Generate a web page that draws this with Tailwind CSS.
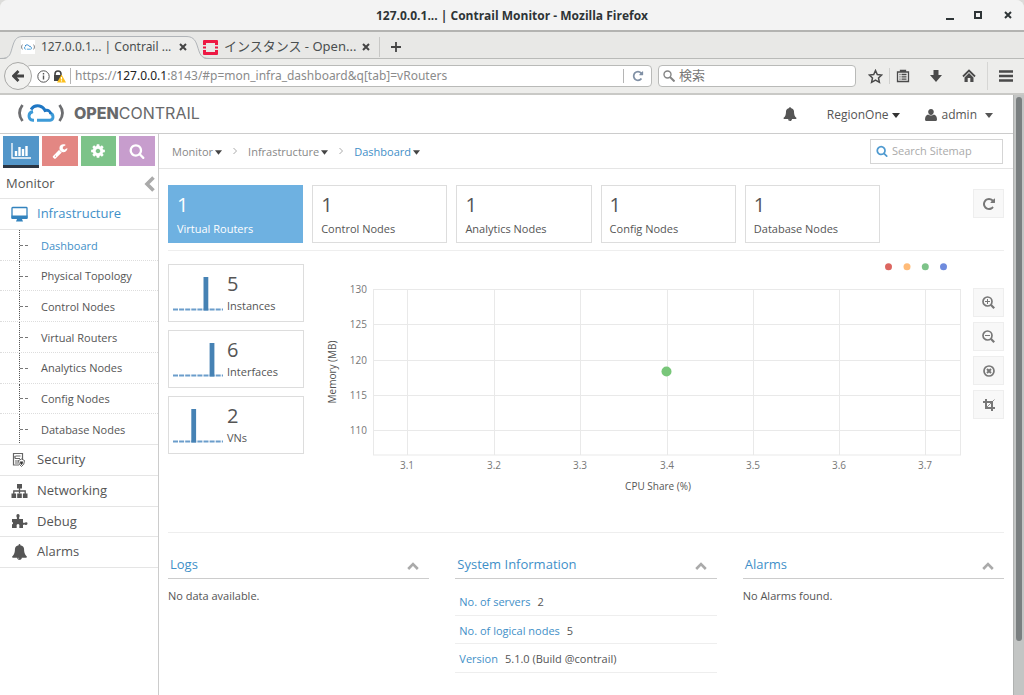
<!DOCTYPE html>
<html lang="en">
<head>
<meta charset="utf-8">
<meta name="viewport" content="width=device-width, initial-scale=1">
<title>127.0.0.1... | Contrail Monitor - Mozilla Firefox</title>
<script src="https://cdn.jsdelivr.net/npm/@tailwindcss/browser@4"></script>
</head>
<body class="bg-[#dcdcda]">
<svg class="hidden" aria-hidden="true">
  <symbol id="bell" viewBox="0 0 1792 1792"><path d="M912 1696q0-16-16-16-59 0-101.500-42.500t-42.500-101.500q0-16-16-16t-16 16q0 73 51.500 124.500t124.500 51.500q16 0 16-16zm816-288q0 52-38 90t-90 38h-448q0 106-75 181t-181 75-181-75-75-181h-448q-52 0-90-38t-38-90q50-42 91-88t85-119.500 74.500-158.500 50-206 19.500-260q0-152 117-282.500t307-158.500q-8-19-8-39 0-40 28-68t68-28 68 28 28 68q0 20-8 39 190 28 307 158.500t117 282.500q0 139 19.500 260t50 206 74.500 158.500 85 119.500 91 88z"/></symbol>
  <symbol id="search" viewBox="0 0 1792 1792"><path d="M1216 832q0-185-131.500-316.500t-316.500-131.500-316.500 131.500-131.500 316.500 131.500 316.500 316.500 131.500 316.500-131.500 131.500-316.500zm512 832q0 52-38 90t-90 38q-54 0-90-38l-343-342q-179 124-399 124-143 0-273.500-55.500t-225-150-150-225-55.500-273.500 55.500-273.500 150-225 225-150 273.500-55.500 273.500 55.500 225 150 150 225 55.500 273.500q0 220-124 399l343 343q37 37 37 90z"/></symbol>
  <symbol id="repeat" viewBox="0 0 1792 1792"><path d="M1664 256v448q0 26-19 45t-45 19h-448q-42 0-59-40-17-39 14-69l138-138q-148-137-349-137-104 0-198.500 40.500t-163.500 109.500-109.500 163.500-40.500 198.500 40.500 198.500 109.500 163.500 163.500 109.500 198.500 40.500q119 0 225-52t179-147q7-10 23-12 15 0 25 9l137 138q9 8 9.500 20.500t-7.500 22.500q-109 132-264 204.500t-327 72.500q-156 0-298-61t-245-164-164-245-61-298 61-298 164-245 245-164 298-61q147 0 284.500 55.500t244.500 156.500l130-129q29-31 70-14 39 17 39 59z"/></symbol>
  <symbol id="caret" viewBox="0 0 8 5"><path d="M0 0h8L4 5z"/></symbol>
  <symbol id="collapse" viewBox="0 0 12 8"><path d="M1.200 7 6 2.200 10.800 7" fill="none" stroke="currentColor" stroke-width="2.600"/></symbol>
  <symbol id="cloud" viewBox="0 0 46 20">
    <path d="M4.500 2Q1.500 6 1.500 10t3 8M41.500 2Q44.500 6 44.500 10t-3 8" fill="none" stroke="#6d6e71" stroke-width="2.800"/>
    <path d="M16 17.300h-1q-4-.5-4-4.300 0-3.500 4-4.500M19 17.300h13q3-.5 3-3.300 0-3-2.500-3.500" fill="none" stroke="#3d9bd8" stroke-width="2.900"/>
    <path d="M13 6.500Q16 2 21.500 3q4 1 5.500 4.500 5-1 5.700 3.500" fill="none" stroke="#1f77c4" stroke-width="2.900"/>
  </symbol>
</svg>

<div class="flex min-h-screen flex-col overflow-hidden rounded-t-lg bg-[#ededeb] font-['Open_Sans','Noto_Sans_CJK_JP',sans-serif] text-[#555]">

  <!-- Window title -->
  <div class="flex h-8 items-center border-b-2 border-[#b3b3b1] bg-[#f3f3f3] text-[#2e3436]">
    <div class="w-24"></div>
    <div class="flex-1 pt-0.5 text-center text-xs font-bold">127.0.0.1... | Contrail Monitor - Mozilla Firefox</div>
    <div class="flex w-24 items-center justify-end gap-5 pr-3">
      <button aria-label="Minimize" class="flex h-3 w-2 items-end justify-center pb-px"><span class="h-0.5 w-2 bg-[#2e3436]"></span></button>
      <button aria-label="Maximize" class="h-2 w-2 border-2 border-[#2e3436]"></button>
      <button aria-label="Close"><svg class="ml-0.5 h-2 w-2" viewBox="0 0 8 8"><path d="m1 1 6 6m0-6L1 7" stroke="#2e3436" stroke-width="2"/></svg></button>
    </div>
  </div>

  <!-- Tabs -->
  <div class="flex h-[27px] items-center border-b border-[#b9bab8] bg-[#e8e8e6] font-['Noto_Sans','Noto_Sans_CJK_JP',sans-serif] text-[#4a4f50]">
    <div class="relative flex h-[27px] w-[203px] items-center pt-1 pl-[21px] text-xs">
      <svg class="absolute top-1 left-0 h-6 w-[210px]" viewBox="0 0 210 24" aria-hidden="true"><path d="M0 23.500C11 23.500 10 18 13 9 15 3 17 .5 23 .5H186C192 .5 195 3 197 9 200 18 200 23.500 210 23.500V24H0z" fill="#ededeb"/><path d="M0 22.500C11 22.500 10 18 13 9 15 3 17 .5 23 .5H186C192 .5 195 3 197 9 200 18 200 22.500 210 22.500" fill="none" stroke="#b0b4b8"/></svg>
      <div class="relative flex items-center">
        <span class="flex h-3.5 w-3.5 items-center bg-white"><svg class="h-1.5 w-3.5"><use href="#cloud"/></svg></span>
        <a href="#contrail" class="ml-1.5 w-[138px] whitespace-nowrap">127.0.0.1... | Contrail ...</a>
        <button aria-label="Close Contrail tab"><svg class="h-2 w-2" viewBox="0 0 8 8"><path d="m1 1 6 6m0-6L1 7" stroke="#444" stroke-width="2"/></svg></button>
      </div>
    </div>
    <div class="relative mt-1 flex h-5 w-[177px] items-center border-r border-[#c8c8c6] text-[13px]">
      <svg class="h-[15px] w-[15px]" viewBox="0 0 15 15"><path d="M0 1q0-1 1-1h13q1 0 1 1v4h-3V3H3v2H0zM0 6.500h3v2H0zM12 6.500h3v2h-3zM0 10h3v2h9v-2h3v4q0 1-1 1H1q-1 0-1-1z" fill="#ed1944"/></svg>
      <a href="#instances" class="ml-1.5 w-[138px] whitespace-nowrap">インスタンス - Open...</a>
      <button aria-label="Close instances tab"><svg class="h-2 w-2" viewBox="0 0 8 8"><path d="m1 1 6 6m0-6L1 7" stroke="#444" stroke-width="2"/></svg></button>
    </div>
    <button aria-label="New tab" class="mt-1 ml-2.5"><svg class="h-3 w-3" viewBox="0 0 12 12"><path d="M6 1v10M1 6h10" stroke="#444" stroke-width="1.800"/></svg></button>
  </div>

  <!-- Navigation toolbar -->
  <div class="flex h-9 items-center border-b-2 border-[#c9c9c6] bg-[#ededeb] pl-1 font-['Noto_Sans','Noto_Sans_CJK_JP',sans-serif] text-xs">
    <button aria-label="Back" class="z-10 flex h-7 w-7 shrink-0 items-center justify-center rounded-full border border-[#a9a9a7] bg-[#f1f1ef]"><svg class="h-3 w-3" viewBox="0 0 12 12"><path d="M6.500 1 1.500 6l5 5M2 6h10" fill="none" stroke="#444" stroke-width="2.800"/></svg></button>
    <div class="-ml-1.5 flex h-[22px] flex-1 items-center rounded-sm border border-[#b9bab8] bg-white pl-2.5">
      <svg class="h-[13px] w-[13px] shrink-0" viewBox="0 0 13 13"><circle cx="6.500" cy="6.500" r="5.700" fill="none" stroke="#555"/><path d="M6.500 5.500v4M6.500 3v1.500" stroke="#555" stroke-width="1.400"/></svg>
      <svg class="ml-[3px] h-[13px] w-[13px] shrink-0" viewBox="0 0 13 13"><path d="M2 6V4a3 3 0 0 1 6 0v2" fill="none" stroke="#444" stroke-width="1.600"/><path d="M1 5h8v6H1z" fill="#444"/><path d="m8.500 4.500 4.500 8H4z" fill="#fbbf1e"/><path d="M8.500 7v2.500m0 .8v1.200" stroke="#fff" stroke-width="1.200"/></svg>
      <div class="ml-1 grid flex-1 items-center border-l border-[#b5b5b5] pl-1">
        <input class="col-start-1 row-start-1 w-full text-transparent outline-none" aria-label="Address">
        <div class="pointer-events-none col-start-1 row-start-1 whitespace-nowrap text-[#8b8b8b]">https://<span class="text-[#222]">127.0.0.1</span>:8143/#p=mon_infra_dashboard&amp;q[tab]=vRouters</div>
      </div>
      <button aria-label="Reload" class="flex h-3.5 w-7 items-center justify-center border-l border-[#b5b5b5]"><svg class="h-3 w-3 fill-[#8090a5]"><use href="#repeat"/></svg></button>
    </div>
    <div class="ml-1.5 flex h-[22px] w-[198px] shrink-0 items-center rounded-sm border border-[#b9bab8] bg-white pl-1">
      <svg class="h-3 w-3" viewBox="0 0 12 12"><circle cx="4.500" cy="4.500" r="3.500" fill="none" stroke="#858585" stroke-width="1.400"/><path d="m7 7 4.500 4.500" stroke="#858585" stroke-width="2"/></svg>
      <input aria-label="検索" placeholder="検索" class="ml-1 min-w-0 flex-1 text-[13px] outline-none placeholder:text-[#777]">
    </div>
    <div class="flex shrink-0 items-center pl-3 text-[#4a4a4a]">
      <button aria-label="Bookmark"><svg class="h-[15px] w-[15px]" viewBox="0 0 15 15"><path d="m7.500 1.500 1.800 4 4.400.5-3.200 3 .9 4.400-3.900-2.200-3.900 2.200.9-4.400-3.200-3 4.400-.5z" fill="none" stroke="currentColor" stroke-width="1.500"/></svg></button>
      <span class="mx-1.5 h-4 w-px bg-[#d0d0ce]"></span>
      <button aria-label="Bookmarks list"><svg class="h-3.5 w-3.5" viewBox="0 0 14 14"><path d="M1.500 3h11v9.500h-11zM4.500 3V1.500h5V3M3.500 5.500h1m1 0h5m-7 2.300h1m1 0h5m-7 2.300h1m1 0h5" fill="none" stroke="currentColor" stroke-width="1.300"/></svg></button>
      <button aria-label="Downloads" class="ml-5"><svg class="h-3.5 w-3" viewBox="0 0 12 14"><path d="M3.500 1h5v5H12l-6 7-6-7h3.500z" fill="currentColor"/></svg></button>
      <button aria-label="Home" class="ml-5"><svg class="h-3.5 w-3.5" viewBox="0 0 14 14"><path d="m1 7.500 6-6 6 6" fill="none" stroke="currentColor" stroke-width="1.800"/><path d="M2.500 8.500 7 4l4.500 4.500V13H8.300V9H5.700v4H2.500z" fill="currentColor"/></svg></button>
      <span class="mx-[11px] h-7 w-px bg-[#d6d6d4]"></span>
      <button aria-label="Menu" class="mr-[11px]"><svg class="h-3 w-3.5" viewBox="0 0 14 12"><path d="M0 1.500h14M0 6h14M0 10.500h14" stroke="currentColor" stroke-width="2.500"/></svg></button>
    </div>
  </div>

  <div class="flex flex-1">
    <div class="flex min-w-0 flex-1 flex-col bg-white">
      <!-- Site header -->
      <header class="flex h-[39px] items-center border-b border-[#ccc] pr-5 text-xs">
        <a href="#home" class="flex items-center pb-0.5 pl-[18px] font-['Inter',sans-serif] text-base leading-none text-[#68696b]">
          <svg class="mr-2.5 h-5 w-[46px]"><use href="#cloud"/></svg><span><b class="font-extrabold">OPEN</b>CONTRAIL</span>
        </a>
        <button aria-label="Notifications" class="ml-auto"><svg class="h-3.5 w-3.5 fill-[#555]"><use href="#bell"/></svg></button>
        <button class="ml-[30px] flex items-center gap-1 pt-0.5">RegionOne<svg class="h-[5px] w-2 fill-[#333]"><use href="#caret"/></svg></button>
        <button class="ml-[25px] flex items-center pt-0.5"><svg class="mr-1 h-3 w-3 fill-[#555]" viewBox="0 0 12 12"><path d="M6 0c4 0 3.500 6 0 6S2 0 6 0M3 5.500q3 2 6 0 3 1 3 5 0 1.500-1.500 1.500h-9Q0 12 0 10.500q0-4 3-5"/></svg>admin<svg class="ml-2 h-[5px] w-2 fill-[#555]"><use href="#caret"/></svg></button>
      </header>

      <div class="flex flex-1">
        <!-- Sidebar -->
        <nav class="w-[159px] shrink-0 border-r border-[#ccc] text-[13px]">
          <div class="flex h-[35px] gap-[3px] px-[3px] pt-0.5">
            <button aria-label="Monitor" class="flex h-8 flex-1 items-center justify-center border-b-[3px] border-[#2b3542] bg-[#5396c9]"><svg class="h-4 w-5" viewBox="0 0 20 16"><path d="M1 0v15h19" fill="none" stroke="#fff" stroke-width="1.300"/><path d="M5 13V8M8.500 13V4M12 13V6M15.500 13V3" stroke="#fff" stroke-width="2.400"/></svg></button>
            <button aria-label="Configure" class="flex h-[30px] flex-1 items-center justify-center bg-[#e38783]"><svg class="h-4 w-4 fill-white" viewBox="0 0 1792 1792"><path d="M448 1472q0-26-19-45t-45-19-45 19-19 45 19 45 45 19 45-19 19-45zm644-420l-682 682q-37 37-90 37-52 0-91-37l-106-108q-38-36-38-90 0-53 38-91l681-681q39 98 114.500 173.500t173.500 114.500zm634-435q0 39-23 106-47 134-164.500 217.500t-258.500 83.500q-185 0-316.500-131.500t-131.500-316.500 131.500-316.500 316.500-131.500q58 0 121.500 16.500t107.500 46.500q16 11 16 28t-16 28l-293 169v224l193 107q5-3 79-48.500t135.500-81 70.500-35.500q15 0 23.500 10t8.500 25z"/></svg></button>
            <button aria-label="Settings" class="flex h-[30px] flex-1 items-center justify-center bg-[#7dc389]"><svg class="h-4 w-4 fill-white" viewBox="0 0 1792 1792"><path d="M1152 896q0-106-75-181t-181-75-181 75-75 181 75 181 181 75 181-75 75-181zm512-109v222q0 12-8 23t-20 13l-185 28q-19 54-39 91 35 50 107 138 10 12 10 25t-9 23q-27 37-99 108t-94 71q-12 0-26-9l-138-108q-44 23-91 38-16 136-29 186-7 28-36 28h-222q-14 0-24.500-8.500t-11.500-21.500l-28-184q-49-16-90-37l-141 107q-10 9-25 9-14 0-25-11-126-114-165-168-7-10-7-23 0-12 8-23 15-21 51-66.500t54-70.500q-27-50-41-99l-183-27q-13-2-21-12.500t-8-23.500v-222q0-12 8-23t19-13l186-28q14-46 39-92-40-57-107-138-10-12-10-24 0-10 9-23 26-36 98.500-107.500t94.500-71.500q13 0 26 10l138 107q44-23 91-38 16-136 29-186 7-28 36-28h222q14 0 24.500 8.500t11.500 21.500l28 184q49 16 90 37l142-107q9-9 24-9 13 0 25 10 129 119 165 170 7 8 7 22 0 12-8 23-15 21-51 66.500t-54 70.500q26 50 41 98l183 28q13 2 21 12.500t8 23.500z"/></svg></button>
            <button aria-label="Query" class="flex h-[30px] flex-1 items-center justify-center bg-[#c79dcd]"><svg class="h-4 w-4 fill-white"><use href="#search"/></svg></button>
          </div>
          <div class="flex h-[30px] items-center justify-between border-b border-[#e5e5e5] pr-[3px] pl-1.5">Monitor
            <button aria-label="Collapse menu"><svg class="h-4 w-[11px]" viewBox="0 0 11 16"><path d="M9.500 1.500 3 8l6.500 6.500" fill="none" stroke="#aaa" stroke-width="3.600"/></svg></button>
          </div>
          <a href="#infrastructure" class="flex h-[31px] items-center border-b border-[#e5e5e5] pl-[11px] text-[#3f8fc8]"><svg class="mr-[9px] h-4 w-[17px]" viewBox="0 0 17 16"><path d="M1.700 1.500h13.600q.7 0 .7.700v9.600H1V2.200q0-.7.700-.7z" fill="none" stroke="#3383be" stroke-width="1.300"/><path d="M.5 9.500h16V12q0 1-1 1h-14q-1 0-1-1zM6 13h5l1 2.500H5z" fill="#3383be"/></svg>Infrastructure</a>
          <div class="grid h-[215px] grid-rows-7 text-[11px]">
            <a href="#dashboard" class="flex items-stretch text-[#3f8fc8]"><span class="ml-[19px] flex items-center border-l border-dotted border-[#555]"><i class="w-2 border-t border-dashed border-[#777]"></i></span><span class="-ml-7 flex flex-1 items-center border-b border-dotted border-[#ddd] pt-0.5 pl-[41px]">Dashboard</span></a>
            <a href="#topology" class="flex items-stretch"><span class="ml-[19px] flex items-center border-l border-dotted border-[#555]"><i class="w-2 border-t border-dashed border-[#777]"></i></span><span class="-ml-7 flex flex-1 items-center border-b border-dotted border-[#ddd] pt-0.5 pl-[41px]">Physical Topology</span></a>
            <a href="#control" class="flex items-stretch"><span class="ml-[19px] flex items-center border-l border-dotted border-[#555]"><i class="w-2 border-t border-dashed border-[#777]"></i></span><span class="-ml-7 flex flex-1 items-center border-b border-dotted border-[#ddd] pt-0.5 pl-[41px]">Control Nodes</span></a>
            <a href="#vrouters" class="flex items-stretch"><span class="ml-[19px] flex items-center border-l border-dotted border-[#555]"><i class="w-2 border-t border-dashed border-[#777]"></i></span><span class="-ml-7 flex flex-1 items-center border-b border-dotted border-[#ddd] pt-0.5 pl-[41px]">Virtual Routers</span></a>
            <a href="#analytics" class="flex items-stretch"><span class="ml-[19px] flex items-center border-l border-dotted border-[#555]"><i class="w-2 border-t border-dashed border-[#777]"></i></span><span class="-ml-7 flex flex-1 items-center border-b border-dotted border-[#ddd] pt-0.5 pl-[41px]">Analytics Nodes</span></a>
            <a href="#config" class="flex items-stretch"><span class="ml-[19px] flex items-center border-l border-dotted border-[#555]"><i class="w-2 border-t border-dashed border-[#777]"></i></span><span class="-ml-7 flex flex-1 items-center border-b border-dotted border-[#ddd] pt-0.5 pl-[41px]">Config Nodes</span></a>
            <a href="#database" class="flex items-stretch"><span class="ml-[19px] flex items-center border-l border-dotted border-[#555]"><i class="w-2 border-t border-dashed border-[#777]"></i></span><span class="-ml-7 flex flex-1 items-center border-b border-[#e5e5e5] pt-0.5 pl-[41px]">Database Nodes</span></a>
          </div>
          <div class="grid h-[123px] grid-rows-4">
            <a href="#security" class="flex items-center border-b border-[#e5e5e5] pl-[11px]"><svg class="mr-[9px] h-4 w-[17px]" viewBox="0 0 17 16"><path d="M8 13H2.500V1.500h9V7M4.500 4h5M4 6.500h5M4 6.500V4M4 9h4M4 11h3" fill="none" stroke="#666" stroke-width="1.200"/><path d="M7.500 8.500 10.500 7l3 1.500q0 4.500-3 6-3-1.500-3-6z" fill="#fff" stroke="#666"/><path d="M9 9.500h3q0 2.500-1.500 3.500Q9 12 9 9.500z" fill="#333"/></svg>Security</a>
            <a href="#networking" class="flex items-center border-b border-[#e5e5e5] pl-[11px]"><svg class="mr-[9px] h-4 w-[17px] fill-[#555]" viewBox="0 0 17 16"><path d="M6 1h5v4.500H6zM.5 10.500h4.600V15H.5zM6.200 10.500h4.600V15H6.200zM11.900 10.500h4.600V15h-4.600z"/><path d="M8.500 5v5.500M2.800 11V8h11.400v3" fill="none" stroke="#555" stroke-width="1.300"/></svg>Networking</a>
            <a href="#debug" class="flex items-center border-b border-[#e5e5e5] pl-[11px]"><svg class="mr-[9px] h-4 w-[17px] fill-[#555]" viewBox="0 0 17 16"><path d="M1 6h4.800q.6-1-.3-2.300Q5 1 7 1t1.500 2.700Q7.600 5 8.300 6H12v3.500q1 .8 2 .1 2.500-1 2.500 1t-2.500 1.200q-1-.6-2 .2v3H8.500q-.7-1 0-2Q8.500 11 7 11t-1.500 2q.7 1 0 2H1v-3.500q1.500-.5 1-2-.5-.5-1-.5z"/></svg>Debug</a>
            <a href="#alarms" class="flex items-center border-b border-[#e5e5e5] pl-[11px]"><svg class="mr-[9px] h-4 w-[17px] fill-[#555]"><use href="#bell"/></svg>Alarms</a>
          </div>
        </nav>

        <main class="min-w-0 flex-1 text-[11px]">
          <!-- Breadcrumb -->
          <div class="flex h-[35px] items-center border-b border-[#e5e5e5] pr-2.5 pl-[13px] text-[#888]">
            <button class="flex items-center gap-0.5 pt-0.5">Monitor<svg class="h-[5px] w-[7px] fill-[#444]"><use href="#caret"/></svg></button>
            <svg class="mx-[11px] h-2 w-1" viewBox="0 0 4 8"><path d="m.5 1 3 3-3 3" fill="none" stroke="#aaa"/></svg>
            <button class="flex items-center gap-0.5 pt-0.5">Infrastructure<svg class="h-[5px] w-[7px] fill-[#444]"><use href="#caret"/></svg></button>
            <svg class="mx-[11px] h-2 w-1" viewBox="0 0 4 8"><path d="m.5 1 3 3-3 3" fill="none" stroke="#aaa"/></svg>
            <button class="flex items-center gap-0.5 pt-0.5 text-[#3f8fc8]">Dashboard<svg class="h-[5px] w-[7px] fill-[#444]"><use href="#caret"/></svg></button>
            <label class="ml-auto flex h-[25px] w-[133px] items-center border border-[#d5d5d5] pl-[5px]"><svg class="h-3 w-3 fill-[#4f9ad0]"><use href="#search"/></svg><input aria-label="Search Sitemap" placeholder="Search Sitemap" class="ml-1 min-w-0 flex-1 outline-none placeholder:text-[#aaa]"></label>
          </div>

          <div class="px-[9px] pt-4">
            <!-- Node counts -->
            <div class="flex items-start justify-between border-b border-[#eee] pb-[7px]">
              <div class="grid w-[712px] grid-cols-5 gap-[9px] leading-4">
                <button class="flex h-[58px] flex-col border border-[#6eb1e1] bg-[#6eb1e1] px-2 pt-[7px] text-left text-white"><span class="text-xl leading-6">1</span><span class="pt-1">Virtual Routers</span></button>
                <button class="flex h-[58px] flex-col border border-[#ddd] px-2 pt-[7px] text-left"><span class="text-xl leading-6">1</span><span class="pt-1">Control Nodes</span></button>
                <button class="flex h-[58px] flex-col border border-[#ddd] px-2 pt-[7px] text-left"><span class="text-xl leading-6">1</span><span class="pt-1">Analytics Nodes</span></button>
                <button class="flex h-[58px] flex-col border border-[#ddd] px-2 pt-[7px] text-left"><span class="text-xl leading-6">1</span><span class="pt-1">Config Nodes</span></button>
                <button class="flex h-[58px] flex-col border border-[#ddd] px-2 pt-[7px] text-left"><span class="text-xl leading-6">1</span><span class="pt-1">Database Nodes</span></button>
              </div>
              <button aria-label="Refresh" class="mt-1 flex h-[29px] w-[31px] items-center justify-center border border-[#eee] bg-[#f8f8f8]"><svg class="h-3.5 w-3.5 fill-[#777]"><use href="#repeat"/></svg></button>
            </div>

            <div class="flex items-start border-b border-[#eee] pt-[13px] pb-[35px]">
              <div class="flex w-[136px] shrink-0 flex-col gap-2 leading-4">
                <div class="flex h-[58px] border border-[#ddd] pt-[7px] pl-1"><svg class="mt-[5px] h-[34px] w-[50px]" viewBox="0 0 50 34"><path d="M0 32.500h50" stroke="#6b9dcb" stroke-width="2" stroke-dasharray="5 1.100"/><path d="M30.500 0h4.800v33.500h-4.800z" fill="#4682b4"/></svg><div class="flex flex-col pl-1"><span class="text-xl leading-6">5</span><span class="pt-0.5">Instances</span></div></div>
                <div class="flex h-[58px] border border-[#ddd] pt-[7px] pl-1"><svg class="mt-[5px] h-[34px] w-[50px]" viewBox="0 0 50 34"><path d="M0 32.500h50" stroke="#6b9dcb" stroke-width="2" stroke-dasharray="5 1.100"/><path d="M36.600 0h4.800v33.500h-4.800z" fill="#4682b4"/></svg><div class="flex flex-col pl-1"><span class="text-xl leading-6">6</span><span class="pt-0.5">Interfaces</span></div></div>
                <div class="flex h-[58px] border border-[#ddd] pt-[7px] pl-1"><svg class="mt-[5px] h-[34px] w-[50px]" viewBox="0 0 50 34"><path d="M0 32.500h50" stroke="#6b9dcb" stroke-width="2" stroke-dasharray="5 1.100"/><path d="M18.300 0h4.800v33.500h-4.800z" fill="#4682b4"/></svg><div class="flex flex-col pl-1"><span class="text-xl leading-6">2</span><span class="pt-0.5">VNs</span></div></div>
              </div>

              <!-- CPU / memory scatter chart -->
              <svg class="h-auto min-w-0 flex-1 overflow-visible" viewBox="304 264 669 233" role="img" aria-label="Memory by CPU share">
                <circle cx="888.500" cy="266.700" r="3.500" fill="#dc6660"/><circle cx="907" cy="266.700" r="3.500" fill="#ffbb78"/><circle cx="925.300" cy="266.700" r="3.500" fill="#7dc389"/><circle cx="943.500" cy="266.700" r="3.500" fill="#6f8bdd"/>
                <path d="M373 289.500h588M373 324.500h588M373 360.500h588M373 395.500h588M373 430.500h588M373 455h588M373.500 289v166M407.500 289v166M494.500 289v166M580.500 289v166M667.500 289v166M753.500 289v166M839.500 289v166M925.500 289v166M960.500 289v166" stroke="#e9e9e9" fill="none"/>
                <circle cx="666.500" cy="371.500" r="5" fill="#78c679"/>
                <g font-size="10" fill="#777" text-anchor="end"><text x="367" y="293">130</text><text x="367" y="328">125</text><text x="367" y="364">120</text><text x="367" y="399">115</text><text x="367" y="434">110</text></g>
                <g font-size="10" fill="#777" text-anchor="middle"><text x="407" y="469">3.1</text><text x="494" y="469">3.2</text><text x="580" y="469">3.3</text><text x="667" y="469">3.4</text><text x="753" y="469">3.5</text><text x="839" y="469">3.6</text><text x="925" y="469">3.7</text></g>
                <g font-size="10" fill="#555" text-anchor="middle"><text x="658" y="490">CPU Share (%)</text><text transform="translate(336 372) rotate(-90)">Memory (MB)</text></g>
              </svg>

              <div class="mt-6 flex shrink-0 flex-col gap-[5px] text-[#777]">
                <button aria-label="Zoom in" class="flex h-[29px] w-[31px] items-center justify-center border border-[#eee] bg-[#f8f8f8]"><svg class="h-[13px] w-[13px]" viewBox="0 0 13 13"><circle cx="5.500" cy="5.500" r="4.500" fill="none" stroke="currentColor" stroke-width="1.700"/><path d="M3 5.500h5M5.500 3v5" stroke="currentColor"/><path d="m8.800 8.800 3.400 3.400" stroke="currentColor" stroke-width="2.200"/></svg></button>
                <button aria-label="Zoom out" class="flex h-[29px] w-[31px] items-center justify-center border border-[#eee] bg-[#f8f8f8]"><svg class="h-[13px] w-[13px]" viewBox="0 0 13 13"><circle cx="5.500" cy="5.500" r="4.500" fill="none" stroke="currentColor" stroke-width="1.700"/><path d="M3 5.500h5" stroke="currentColor"/><path d="m8.800 8.800 3.400 3.400" stroke="currentColor" stroke-width="2.200"/></svg></button>
                <button aria-label="Reset zoom" class="flex h-[29px] w-[31px] items-center justify-center border border-[#eee] bg-[#f8f8f8]"><svg class="h-3 w-3" viewBox="0 0 12 12"><circle cx="6" cy="6" r="5" fill="none" stroke="currentColor" stroke-width="1.700"/><path d="m4 4 4 4m0-4L4 8" stroke="currentColor" stroke-width="2"/></svg></button>
                <button aria-label="Crop" class="flex h-[29px] w-[31px] items-center justify-center border border-[#eee] bg-[#f8f8f8]"><svg class="h-3 w-3" viewBox="0 0 12 12"><path d="M3 0v9h9M0 3h9v9" fill="none" stroke="currentColor" stroke-width="2"/><path d="m3 9 8.500-8.500" stroke="currentColor" stroke-width=".8"/></svg></button>
              </div>
            </div>

            <div class="grid grid-cols-3 gap-[26px] pt-[18px] leading-4">
              <section>
                <h2 class="flex h-7 items-center justify-between border-b border-[#ccc] pr-2.5 pb-0.5 pl-0.5 text-[13px] text-[#3f8fc8]">Logs<button aria-label="Collapse logs" class="pt-1"><svg class="h-2 w-3 text-[#aaa]"><use href="#collapse"/></svg></button></h2>
                <p class="pt-[9px]">No data available.</p>
              </section>
              <section>
                <h2 class="flex h-7 items-center justify-between border-b border-[#ccc] pr-2.5 pb-0.5 pl-0.5 text-[13px] text-[#3f8fc8]">System Information<button aria-label="Collapse system information" class="pt-1"><svg class="h-2 w-3 text-[#aaa]"><use href="#collapse"/></svg></button></h2>
                <dl class="pt-2">
                  <div class="flex h-[29px] items-center gap-[7px] border-b border-[#eee] pt-0.5 pl-1"><dt class="text-[#3f8fc8]">No. of servers</dt><dd>2</dd></div>
                  <div class="flex h-7 items-center gap-[7px] border-b border-[#eee] pt-0.5 pl-1"><dt class="text-[#3f8fc8]">No. of logical nodes</dt><dd>5</dd></div>
                  <div class="flex h-[29px] items-center gap-[7px] border-b border-[#eee] pt-0.5 pl-1"><dt class="text-[#3f8fc8]">Version</dt><dd>5.1.0 (Build @contrail)</dd></div>
                </dl>
              </section>
              <section>
                <h2 class="flex h-7 items-center justify-between border-b border-[#ccc] pr-2.5 pb-0.5 pl-0.5 text-[13px] text-[#3f8fc8]">Alarms<button aria-label="Collapse alarms" class="pt-1"><svg class="h-2 w-3 text-[#aaa]"><use href="#collapse"/></svg></button></h2>
                <p class="pt-[9px]">No Alarms found.</p>
              </section>
            </div>
          </div>
        </main>
      </div>
    </div>
    <!-- Scrollbar -->
    <div class="flex w-[11px] shrink-0 flex-col items-center border-l border-[#b0b2b1] bg-[#c3c5c4] pt-0.5"><div class="h-[91%] w-1.5 rounded-full bg-[#7a7f80]"></div></div>
  </div>
</div>
</body>
</html>
